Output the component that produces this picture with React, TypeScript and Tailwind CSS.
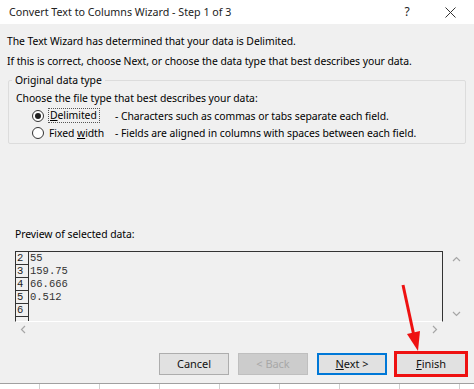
const font = { fontFamily: '"Noto Sans", "Open Sans", sans-serif' };

const Radio = ({ checked }: { checked?: boolean }) => (
  <span className="flex items-center justify-center w-[12px] h-[12px] rounded-full border border-[#333] bg-white">
    {checked && <span className="w-[6px] h-[6px] rounded-full bg-[#222]" />}
  </span>
);

const Btn = ({
  children,
  variant = "normal",
}: {
  children: React.ReactNode;
  variant?: "normal" | "disabled" | "default";
}) => {
  const cls =
    variant === "disabled"
      ? "bg-[#cccccc] border-[#bfbfbf] text-[#a8a8a8]"
      : variant === "default"
      ? "bg-[#e1e1e1] border-[#0078d7] border-2 text-[#111]"
      : "bg-[#e1e1e1] border-[#adadad] text-[#111]";
  return (
    <div
      className={`w-[70px] h-[22px] flex items-center justify-center border text-[11px] ${cls}`}
    >
      {children}
    </div>
  );
};

const rows = [
  ["2", "55"],
  ["3", "159.75"],
  ["4", "66.666"],
  ["5", "0.512"],
  ["6", ""],
];

export default function App() {
  return (
    <div className="relative w-[474px] h-[389px] overflow-hidden bg-white text-black" style={font}>
      {/* title bar */}
      <div className="h-[24px] flex items-center pl-[9px] pr-[16px] text-[10.7px] text-[#222]">
        <span className="flex-1">Convert Text to Columns Wizard - Step 1 of 3</span>
        <span className="w-[14px] text-center mr-[31px] text-[12px]">?</span>
        <svg width="11" height="11" viewBox="0 0 11 11" className="mr-[2px]">
          <path d="M0.5 0.5 L10.5 10.5 M10.5 0.5 L0.5 10.5" stroke="#333" strokeWidth="1" />
        </svg>
      </div>

      {/* body */}
      <div className="h-[359px] bg-[#f0f0f0] flex flex-col px-[8px] text-[10.4px] tracking-[-0.05px] leading-[20px]">
        <div className="pt-[7px]">
          <div className="-ml-[1px]">The Text Wizard has determined that your data is Delimited.</div>
          <div className="-ml-[1px]">If this is correct, choose Next, or choose the data type that best describes your data.</div>
        </div>

        <fieldset className="mt-[2px] border border-[#dcdcdc] rounded-[2px] pb-[2px] pl-[7px]">
          <legend className="px-[3px] -ml-[4px] leading-[14px]">Original data type</legend>
          <div className="leading-[17px] pt-[3px]">Choose the file type that best describes your data:</div>
          <div className="flex items-center h-[17px] pl-[16px]">
            <Radio checked />
            <span className="ml-[4px] w-[52px] border border-dotted border-[#555] px-[1px] leading-[13px]">
              <span className="underline underline-offset-1">D</span>elimited
            </span>
            <span className="ml-[15px]">- Characters such as commas or tabs separate each field.</span>
          </div>
          <div className="flex items-center h-[17px] pl-[16px]">
            <Radio />
            <span className="ml-[5px] w-[66px]">
              Fixed <span className="underline underline-offset-1">w</span>idth
            </span>
            <span>- Fields are aligned in columns with spaces between each field.</span>
          </div>
        </fieldset>

        <div className="h-[80px]" />
        <div className="pl-[7px]">Preview of selected data:</div>

        {/* preview */}
        <div className="mt-[7px] ml-[7px] flex w-[453px]">
          <div className="w-[428px] h-[71px] border-x border-t border-[#333] border-b border-b-white flex flex-col overflow-hidden">
            {rows.map(([n, v]) => (
              <div
                key={n}
                className="flex h-[13px] leading-[13px] text-[10.5px] tracking-normal"
                style={{ fontFamily: '"Liberation Mono", monospace' }}
              >
                <span className="w-[13px] border-r border-b border-[#333] pl-[1px] text-[#222]">{n}</span>
                <span className="pl-[1px] text-[#333]">{v}</span>
              </div>
            ))}
            <div className="flex flex-1">
              <span className="w-[13px] border-r border-[#333]" />
            </div>
          </div>
          <div className="flex-1 flex flex-col items-center justify-between py-[5px] pl-[2px]">
            <svg width="9" height="6" viewBox="0 0 9 6">
              <path d="M1 5 L4.5 1.5 L8 5" fill="none" stroke="#a6a6a6" strokeWidth="1.2" />
            </svg>
            <svg width="9" height="6" viewBox="0 0 9 6">
              <path d="M1 1 L4.5 4.5 L8 1" fill="none" stroke="#a6a6a6" strokeWidth="1.2" />
            </svg>
          </div>
        </div>
        <div className="ml-[7px] w-[428px] h-[14px] flex items-center justify-between px-[5px]">
          <svg width="6" height="9" viewBox="0 0 6 9">
            <path d="M5 1 L1.5 4.5 L5 8" fill="none" stroke="#a6a6a6" strokeWidth="1.2" />
          </svg>
          <svg width="6" height="9" viewBox="0 0 6 9">
            <path d="M1 1 L4.5 4.5 L1 8" fill="none" stroke="#a6a6a6" strokeWidth="1.2" />
          </svg>
        </div>

        {/* buttons */}
        <div className="mt-[17px] flex justify-end gap-[9px] pr-[0px]">
          <Btn>Cancel</Btn>
          <Btn variant="disabled">&lt; Back</Btn>
          <Btn variant="default">
            <span className="underline underline-offset-1">N</span>ext &gt;
          </Btn>
          <div className="relative">
            <Btn>
              <span className="underline underline-offset-1">F</span>inish
            </Btn>
            <div className="absolute -inset-[2px] border-[3px] border-[#ee1111]" />
          </div>
        </div>
      </div>

      {/* sheet below */}
      <div className="h-[6px] border-t border-[#a0a0a0] flex bg-white">
        <div className="w-[40px] border-r border-[#d0d0d0]" />
        {Array.from({ length: 7 }).map((_, i) => (
          <div key={i} className="w-[60px] border-r border-[#d0d0d0]" />
        ))}
      </div>

      {/* annotation arrow */}
      <svg className="absolute left-0 top-0 pointer-events-none" width="474" height="389">
        <line x1="403" y1="285" x2="414" y2="336" stroke="#ee1111" strokeWidth="3" />
        <polygon points="407,334 420,331 418,351" fill="#ee1111" />
      </svg>
    </div>
  );
}
